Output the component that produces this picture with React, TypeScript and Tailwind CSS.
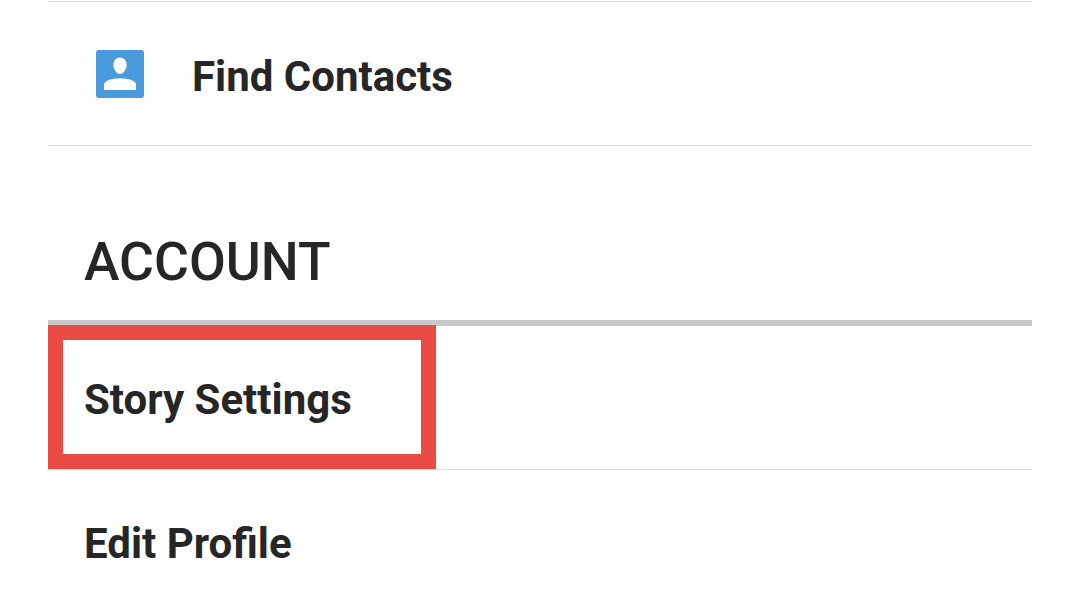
const font = "font-['Roboto',sans-serif]";

function PersonIcon() {
  return (
    <svg viewBox="0 0 48 48" className="h-12 w-12 shrink-0">
      <rect width="48" height="48" rx="3" fill="#4a9ade" />
      <path d="M24 7.5c3.8 0 6.6 3 6.6 7.2 0 4.600-3 9.300-6.600 9.300s-6.600-4.700-6.600-9.300C17.400 10.500 20.200 7.500 24 7.500Z" fill="#fff" />
      <path d="M8 40v-5.500C8 31.200 15 28.300 24 28.300S40 31.200 40 34.500V40Z" fill="#fff" />
    </svg>
  );
}

export default function App() {
  return (
    <div className={`${font} h-[606px] w-[1076px] overflow-hidden bg-white pr-11 pl-12 text-[#262626]`}>
      <div className="mt-px flex h-[145px] items-center border-y border-[#dedede]">
        <div className="ml-12 flex items-center gap-12">
          <PersonIcon />
          <span className="pt-[5px] text-[42px] font-bold">Find Contacts</span>
        </div>
      </div>
      <h2 className="flex h-[174px] items-end pb-[32px] pl-9 text-[53.5px] leading-none font-medium">ACCOUNT</h2>
      <div className="relative flex h-[150px] items-center border-t-[6px] border-b border-t-[#c8c8c8] border-b-[#dedede] pl-9">
        <span className="pt-1 text-[42px] font-bold">Story Settings</span>
        <div className="absolute top-[-1px] left-0 h-[144px] w-[388px] border-[15px] border-[#eb4b45]" />
      </div>
      <div className="pt-[53px] pl-9 text-[42px] leading-none font-bold">Edit Profile</div>
    </div>
  );
}
